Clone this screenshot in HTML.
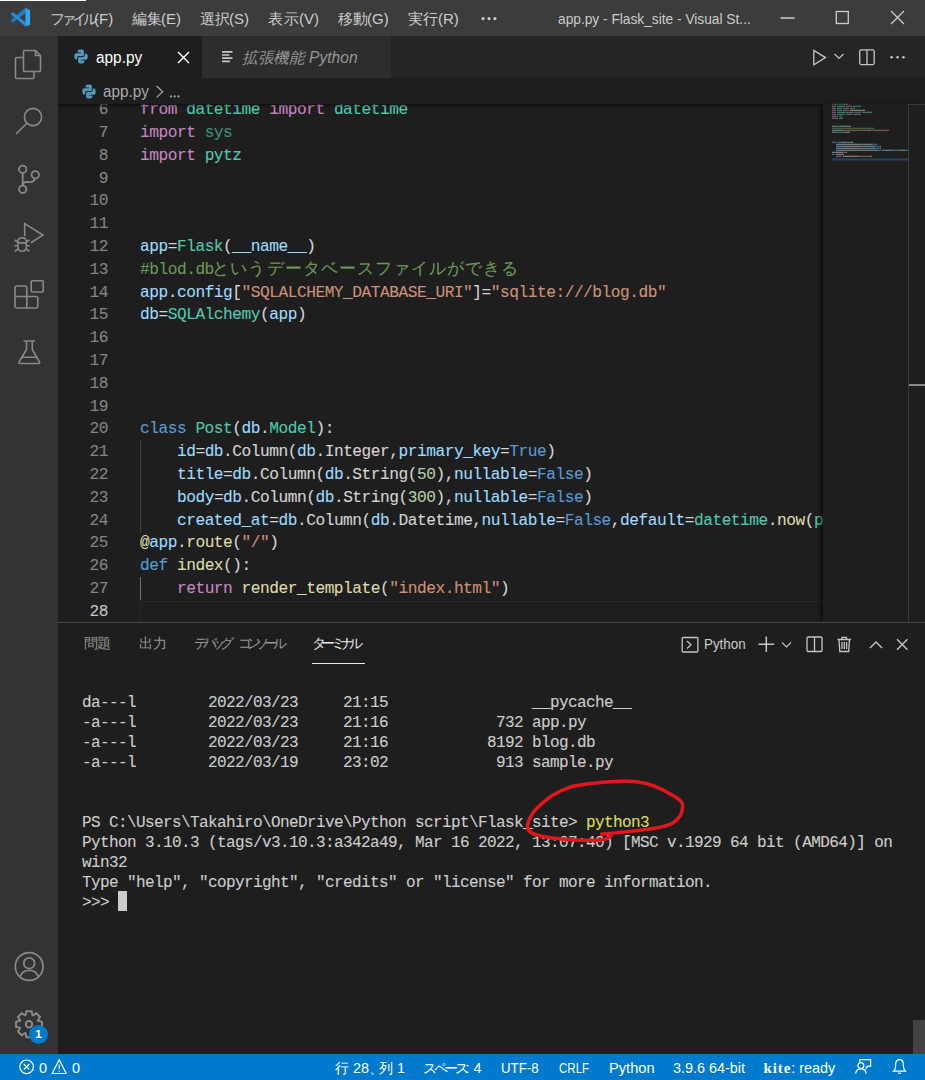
<!DOCTYPE html>
<html><head><meta charset="utf-8">
<style>
*{margin:0;padding:0;box-sizing:border-box}
html,body{width:925px;height:1080px;overflow:hidden;background:#1e1e1e;font-family:"Liberation Sans",sans-serif;font-feature-settings:"palt"}
.a{position:absolute}
svg{position:absolute;overflow:visible}
#title{left:0;top:0;width:925px;height:36px;background:#3c3c3c}
.menu{position:absolute;top:1px;height:36px;line-height:36px;font-size:15px;color:#cccccc;white-space:nowrap}
#act{left:0;top:36px;width:58px;height:1018px;background:#333333}
#tabs{left:58px;top:36px;width:867px;height:42px;background:#252526}
#crumb{left:58px;top:78px;width:867px;height:26px;background:#1e1e1e}
#editor{left:58px;top:104px;width:765px;height:518px;background:#1e1e1e;overflow:hidden}
.ln{position:absolute;left:0;width:50px;text-align:right;color:#858585;-webkit-text-stroke:0.1px currentColor;font-family:"Liberation Mono",monospace;font-size:16.2px;letter-spacing:-0.483px;height:22.8px;line-height:22.8px}
.cl{position:absolute;left:82px;white-space:pre;color:#d4d4d4;-webkit-text-stroke:0.1px currentColor;font-family:"Liberation Mono",monospace;font-size:16.2px;letter-spacing:-0.483px;height:22.8px;line-height:22.8px}
.k{color:#c586c0}.b{color:#569cd6}.t{color:#4ec9b0}.f{color:#dcdcaa}.v{color:#9cdcfe}.s{color:#ce9178}.c{color:#6a9955}.n{color:#b5cea8}
#panel{left:58px;top:622px;width:867px;height:432px;background:#1e1e1e;border-top:1px solid #464646}
.ptab{position:absolute;top:0;height:42px;line-height:42px;font-size:13.5px;color:#969696;white-space:nowrap}
.term{position:absolute;left:24px;white-space:pre;color:#cccccc;-webkit-text-stroke:0.12px currentColor;font-family:"Liberation Mono",monospace;font-size:16px;letter-spacing:-0.6px;height:20px;line-height:20px}
#status{left:0;top:1054px;width:925px;height:26px;background:#007acc}
.st{position:absolute;top:1px;height:26px;line-height:26px;font-size:14.4px;color:#ffffff;white-space:nowrap}
</style></head><body>
<div id="title" class="a">
  <div class="a" style="left:0;top:0;width:86px;height:1px;background:#fff"></div>
  <svg style="left:0;top:0" width="40" height="36" viewBox="0 0 40 36">
    <path d="M25.4 7.8 L25.4 13.2 L12.6 22.6 L10.6 20.6 Z" fill="#1c7fc8"/>
    <path d="M10.6 14.0 L12.6 12.1 L25.4 21.9 L25.4 26.6 Z" fill="#1e8fdc"/>
    <path d="M25.4 7.8 L30.1 10.2 L30.1 24.7 L25.4 26.6 Z" fill="#36a5f0"/>
  </svg>
  <div id="m1" class="menu" style="left:50.20px"><span class="jk" style="letter-spacing:-4.050px">ファイル</span>(F)</div>
  <div id="m2" class="menu" style="left:132.00px"><span class="jk" style="letter-spacing:-0.500px">編集</span>(E)</div>
  <div id="m3" class="menu" style="left:200.00px"><span class="jk" style="letter-spacing:-0.500px">選択</span>(S)</div>
  <div id="m4" class="menu" style="left:268.00px"><span class="jk" style="letter-spacing:0.500px">表示</span>(V)</div>
  <div id="m5" class="menu" style="left:338.00px"><span class="jk" style="letter-spacing:-0.500px">移動</span>(G)</div>
  <div id="m6" class="menu" style="left:408.00px"><span class="jk" style="letter-spacing:0.000px">実行</span>(R)</div>
  <svg style="left:480px;top:16px" width="20" height="6"><circle cx="3" cy="2.6" r="1.6" fill="#ccc"/><circle cx="9" cy="2.6" r="1.6" fill="#ccc"/><circle cx="14.9" cy="2.6" r="1.6" fill="#ccc"/></svg>
  <div id="m7" class="menu" style="left:557.90px;transform:scaleX(0.9152);transform-origin:0 0">app.py - Flask_site - Visual St...</div>
  <svg style="left:0;top:0" width="925" height="36">
    <line x1="780.5" y1="18" x2="794.5" y2="18" stroke="#ccc" stroke-width="1.5"/>
    <rect x="836.3" y="11.5" width="12" height="12" fill="none" stroke="#ccc" stroke-width="1.3"/>
    <path d="M891 11 L904 24 M904 11 L891 24" stroke="#ccc" stroke-width="1.3"/>
  </svg>
</div>
<div id="act" class="a">
  <svg style="left:0;top:0" width="58" height="1018" viewBox="0 36 58 1018" fill="none" stroke="#898989" stroke-width="1.6">
    <!-- explorer -->
    <path d="M22.8 57.5 H16.5 Q15.5 57.5 15.5 58.5 V77.5 Q15.5 78.5 16.5 78.5 H33 Q34 78.5 34 77.5 V71.5"/>
    <path d="M23.5 50.5 H35.5 L40.5 55.5 V70.5 Q40.5 71.5 39.5 71.5 H24.5 Q23.5 71.5 23.5 70.5 V51.5 Q23.5 50.5 24.5 50.5 Z M35.5 50.5 V55.5 H40.5"/>
    <!-- search -->
    <circle cx="33" cy="117" r="8.6"/>
    <path d="M26.8 123.2 L16 134"/>
    <!-- source control -->
    <g stroke-width="1.8">
    <circle cx="22.7" cy="169.3" r="3.7"/>
    <circle cx="35.3" cy="174.8" r="3.7"/>
    <circle cx="22.7" cy="189.3" r="3.7"/>
    <path d="M22.7 173 V185.6 M35 178.5 Q34 182.2 30 182.2 H26 Q22.7 182.2 22.7 185.6"/>
    </g>
    <!-- run debug -->
    <path d="M24.7 236.2 V223.6 L43 235.1 L30.8 242.8" stroke-width="1.6"/>
    <path d="M17.9 247 V242 Q17.9 237.8 22.1 237.8 Q26.3 237.8 26.3 242 V247 Q26.3 251.2 22.1 251.2 Q17.9 251.2 17.9 247 Z M17.9 242.9 H26.3"/>
    <path d="M14.8 240 L17.8 242 M14.4 245.7 H17.8 M14.8 251.3 L17.8 249 M29.4 240 L26.4 242 M29.8 245.7 H26.4 M29.4 251.3 L26.4 249"/>
    <!-- extensions -->
    <path d="M17 286 H25 Q26.8 286 26.8 288 V296.5 H35.8 Q37.8 296.5 37.8 298.5 V306 Q37.8 308 35.8 308 H17 Q15 308 15 306 V288 Q15 286 17 286 Z M15 296.5 H26.8 V308"/>
    <rect x="31.2" y="280.7" width="12" height="11.3" rx="1"/>
    <!-- flask -->
    <path d="M23.5 341 H35 M26.5 341 V349.5 L19 362 Q18.3 363.5 20 363.5 H38.5 Q40.2 363.5 39.5 362 L32.3 349.5 V341 M22 357.2 H36.5" stroke-linejoin="round"/>
    <!-- account -->
    <circle cx="29.2" cy="966.5" r="13.9" stroke-width="1.7"/>
    <circle cx="29.2" cy="963.2" r="5.4" stroke-width="1.7"/>
    <path d="M20.2 976.6 Q22 970.4 29.2 970.4 Q36.4 970.4 38.2 976.6" stroke-width="1.7"/>
    <!-- gear -->
    <g transform="translate(29 1024.2)">
      <path d="M-3.60 -8.90 L-2.52 -12.96 L2.52 -12.96 L3.60 -8.90 L3.75 -8.84 L7.38 -10.94 L10.94 -7.38 L8.84 -3.75 L8.90 -3.60 L12.96 -2.52 L12.96 2.52 L8.90 3.60 L8.84 3.75 L10.94 7.38 L7.38 10.94 L3.75 8.84 L3.60 8.90 L2.52 12.96 L-2.52 12.96 L-3.60 8.90 L-3.75 8.84 L-7.38 10.94 L-10.94 7.38 L-8.84 3.75 L-8.90 3.60 L-12.96 2.52 L-12.96 -2.52 L-8.90 -3.60 L-8.84 -3.75 L-10.94 -7.38 L-7.38 -10.94 L-3.75 -8.84 Z" stroke-width="2" stroke-linejoin="miter"/>
      <circle cx="0" cy="0" r="3.2" stroke-width="2"/>
    </g>
  </svg>
  <div class="a" style="left:29px;top:989px;width:19px;height:19px;border-radius:50%;background:#007acc;color:#fff;font-size:11.5px;font-weight:bold;text-align:center;line-height:19px">1</div>
</div>
<div id="tabs" class="a">
  <div class="a" style="left:0;top:0;width:143.5px;height:42px;background:#1e1e1e"></div>
  <div class="a" style="left:143.5px;top:0;width:189.5px;height:42px;background:#2d2d2d"></div>
  <svg style="left:16px;top:13px" width="14" height="15" viewBox="0 0 14 15">
    <path d="M6.8 0.5 C3.5 0.5 3.7 2 3.7 2 V3.5 H7 V4.2 H2.3 C2.3 4.2 0.3 4 0.3 7.3 C0.3 10.6 2 10.5 2 10.5 H3.2 V8.9 C3.2 8.9 3.1 7.1 5 7.1 H8.1 C8.1 7.1 9.9 7.2 9.9 5.4 V2.3 C9.9 2.3 10.2 0.5 6.8 0.5 Z" fill="#519aba"/>
    <path d="M7.2 14.5 C10.5 14.5 10.3 13 10.3 13 V11.5 H7 V10.8 H11.7 C11.7 10.8 13.7 11 13.7 7.7 C13.7 4.4 12 4.5 12 4.5 H10.8 V6.1 C10.8 6.1 10.9 7.9 9 7.9 H5.9 C5.9 7.9 4.1 7.8 4.1 9.6 V12.7 C4.1 12.7 3.8 14.5 7.2 14.5 Z" fill="#519aba"/>
  </svg>
  <div id="tb1" class="a" style="left:37.90px;transform:scaleX(0.9851);transform-origin:0 0;top:1px;height:42px;line-height:42px;font-size:15.6px;color:#ffffff">app.py</div>
  <svg style="left:0;top:0" width="867" height="42" viewBox="58 36 867 42">
    <path d="M178 52 L189 63 M189 52 L178 63" stroke="#ffffff" stroke-width="1.4"/>
    <path d="M222 51.8 H232.5 M222 55 H229.5 M222 58.2 H232.5 M222 61.4 H230" stroke="#c5c5c5" stroke-width="1.7"/>
    <path d="M813.8 50.5 V64.8 L825.5 57.6 Z" fill="none" stroke="#c5c5c5" stroke-width="1.3"/>
    <path d="M834.5 54 L839 58.5 L843.5 54" fill="none" stroke="#c5c5c5" stroke-width="1.2"/>
    <rect x="859.7" y="49.8" width="14.5" height="14.8" rx="1.5" fill="none" stroke="#c5c5c5" stroke-width="1.3"/>
    <path d="M867 50 V64.5" stroke="#c5c5c5" stroke-width="1.3"/>
    <circle cx="891.6" cy="57.3" r="1.3" fill="#c5c5c5"/><circle cx="897.6" cy="57.3" r="1.3" fill="#c5c5c5"/><circle cx="903.4" cy="57.3" r="1.3" fill="#c5c5c5"/>
  </svg>
  <div id="tb2" class="a" style="left:183.80px;top:1px;height:42px;line-height:42px;font-size:15.6px;color:#969696;font-style:italic"><span class="jk" style="letter-spacing:-0.275px">拡張機能</span> Python</div>
</div>
<div id="crumb" class="a">
  <svg style="left:23.5px;top:5.5px" width="14" height="15" viewBox="0 0 14 15">
    <path d="M6.8 0.5 C3.5 0.5 3.7 2 3.7 2 V3.5 H7 V4.2 H2.3 C2.3 4.2 0.3 4 0.3 7.3 C0.3 10.6 2 10.5 2 10.5 H3.2 V8.9 C3.2 8.9 3.1 7.1 5 7.1 H8.1 C8.1 7.1 9.9 7.2 9.9 5.4 V2.3 C9.9 2.3 10.2 0.5 6.8 0.5 Z" fill="#519aba"/>
    <path d="M7.2 14.5 C10.5 14.5 10.3 13 10.3 13 V11.5 H7 V10.8 H11.7 C11.7 10.8 13.7 11 13.7 7.7 C13.7 4.4 12 4.5 12 4.5 H10.8 V6.1 C10.8 6.1 10.9 7.9 9 7.9 H5.9 C5.9 7.9 4.1 7.8 4.1 9.6 V12.7 C4.1 12.7 3.8 14.5 7.2 14.5 Z" fill="#519aba"/>
  </svg>
  <div id="cr1" class="a" style="left:44.90px;transform:scaleX(0.9787);transform-origin:0 0;top:1px;height:26px;line-height:26px;font-size:15.6px;color:#a9a9a9;white-space:nowrap">app.py</div>
  <svg style="left:0;top:0" width="200" height="26" viewBox="58 78 200 26">
    <path d="M156.6 86 L162.8 91.7 L156.6 97.4" fill="none" stroke="#a9a9a9" stroke-width="1.2"/>
    <circle cx="171" cy="96.4" r="1.1" fill="#a9a9a9"/><circle cx="174.7" cy="96.4" r="1.1" fill="#a9a9a9"/><circle cx="178.4" cy="96.4" r="1.1" fill="#a9a9a9"/>
  </svg>
</div>
<div id="editor" class="a">
  <div class="ln" style="top:-4.80px;color:#858585">6</div><div class="cl" style="top:-4.80px"><span class="k">from</span> <span class="t">datetime</span> <span class="k">import</span> <span class="t">datetime</span></div><div class="ln" style="top:18.00px;color:#858585">7</div><div class="cl" style="top:18.00px"><span class="k">import</span> <span class="t" style="opacity:0.65">sys</span></div><div class="ln" style="top:40.80px;color:#858585">8</div><div class="cl" style="top:40.80px"><span class="k">import</span> <span class="t">pytz</span></div><div class="ln" style="top:63.60px;color:#858585">9</div><div class="ln" style="top:86.40px;color:#858585">10</div><div class="ln" style="top:109.20px;color:#858585">11</div><div class="ln" style="top:132.00px;color:#858585">12</div><div class="cl" style="top:132.00px"><span class="v">app</span>=<span class="t">Flask</span>(<span class="v">__name__</span>)</div><div class="ln" style="top:154.80px;color:#858585">13</div><div class="cl" style="top:154.80px"><span class="c">#blod.db</span><span class="c" style="font-size:16.5px;letter-spacing:1.05px;margin-left:-1.5px">というデータベースファイルができる</span></div><div class="ln" style="top:177.60px;color:#858585">14</div><div class="cl" style="top:177.60px"><span class="v">app</span>.<span class="v">config</span>[<span class="s">&quot;SQLALCHEMY_DATABASE_URI&quot;</span>]=<span class="s">&quot;sqlite:///blog.db&quot;</span></div><div class="ln" style="top:200.40px;color:#858585">15</div><div class="cl" style="top:200.40px"><span class="v">db</span>=<span class="t">SQLAlchemy</span>(<span class="v">app</span>)</div><div class="ln" style="top:223.20px;color:#858585">16</div><div class="ln" style="top:246.00px;color:#858585">17</div><div class="ln" style="top:268.80px;color:#858585">18</div><div class="ln" style="top:291.60px;color:#858585">19</div><div class="ln" style="top:314.40px;color:#858585">20</div><div class="cl" style="top:314.40px"><span class="b">class</span> <span class="t">Post</span>(<span class="v">db</span>.<span class="t">Model</span>):</div><div class="ln" style="top:337.20px;color:#858585">21</div><div class="cl" style="top:337.20px">    <span class="v">id</span>=<span class="v">db</span>.Column(<span class="v">db</span>.Integer,<span class="v">primary_key</span>=<span class="b">True</span>)</div><div class="ln" style="top:360.00px;color:#858585">22</div><div class="cl" style="top:360.00px">    <span class="v">title</span>=<span class="v">db</span>.Column(<span class="v">db</span>.String(<span class="n">50</span>),<span class="v">nullable</span>=<span class="b">False</span>)</div><div class="ln" style="top:382.80px;color:#858585">23</div><div class="cl" style="top:382.80px">    <span class="v">body</span>=<span class="v">db</span>.Column(<span class="v">db</span>.String(<span class="n">300</span>),<span class="v">nullable</span>=<span class="b">False</span>)</div><div class="ln" style="top:405.60px;color:#858585">24</div><div class="cl" style="top:405.60px">    <span class="v">created_at</span>=<span class="v">db</span>.Column(<span class="v">db</span>.Datetime,<span class="v">nullable</span>=<span class="b">False</span>,<span class="v">default</span>=<span class="t">datetime</span>.<span class="f">now</span>(<span class="t">pytz</span>.<span class="v">timezone</span>(<span class="s">&#x27;Asia/Tokyo&#x27;</span>))</div><div class="ln" style="top:428.40px;color:#858585">25</div><div class="cl" style="top:428.40px"><span class="f">@</span><span class="v">app</span>.<span class="f">route</span>(<span class="s">&quot;/&quot;</span>)</div><div class="ln" style="top:451.20px;color:#858585">26</div><div class="cl" style="top:451.20px"><span class="b">def</span> <span class="f">index</span>():</div><div class="ln" style="top:474.00px;color:#858585">27</div><div class="cl" style="top:474.00px">    <span class="k">return</span> <span class="f">render_template</span>(<span class="s">&quot;index.html&quot;</span>)</div><div class="ln" style="top:496.80px;color:#c6c6c6">28</div><div class="a" style="left:81.5px;top:336px;width:1px;height:91.5px;background:#404040"></div><div class="a" style="left:81.5px;top:473px;width:1px;height:23px;background:#707070"></div><div class="a" style="left:81.5px;top:497px;width:700px;height:30px;border-top:1px solid #282828;border-left:1px solid #282828"></div>
</div>
<div class="a" style="left:58px;top:104px;width:867px;height:4px;background:linear-gradient(#0007,#0000)"></div>
<!-- minimap & scrollbar -->
<div class="a" style="left:823px;top:104px;width:102px;height:518px;background:#1e1e1e;box-shadow:-4px 0 5px -2px #000a"></div>
<svg style="left:0;top:0" width="925" height="1080"><rect x="832" y="158.3" width="76" height="2.2" fill="#264f78" opacity="0.7"/><rect x="832" y="113.7" width="4" height="1.3" fill="#c586c0" opacity="0.5"/><rect x="837" y="113.7" width="8" height="1.3" fill="#4ec9b0" opacity="0.5"/><rect x="846" y="113.7" width="6" height="1.3" fill="#c586c0" opacity="0.5"/><rect x="853" y="113.7" width="8" height="1.3" fill="#4ec9b0" opacity="0.5"/><rect x="832" y="115.7" width="6" height="1.3" fill="#c586c0" opacity="0.5"/><rect x="839" y="115.7" width="3" height="1.3" fill="#4ec9b0" opacity="0.5"/><rect x="832" y="117.7" width="6" height="1.3" fill="#c586c0" opacity="0.5"/><rect x="839" y="117.7" width="4" height="1.3" fill="#4ec9b0" opacity="0.5"/><rect x="832" y="125.7" width="3" height="1.3" fill="#9cdcfe" opacity="0.5"/><rect x="835" y="125.7" width="1" height="1.3" fill="#d4d4d4" opacity="0.5"/><rect x="836" y="125.7" width="5" height="1.3" fill="#4ec9b0" opacity="0.5"/><rect x="841" y="125.7" width="1" height="1.3" fill="#d4d4d4" opacity="0.5"/><rect x="842" y="125.7" width="8" height="1.3" fill="#9cdcfe" opacity="0.5"/><rect x="850" y="125.7" width="1" height="1.3" fill="#d4d4d4" opacity="0.5"/><rect x="832" y="127.7" width="8" height="1.3" fill="#6a9955" opacity="0.5"/><rect x="840" y="127.7" width="34" height="1.3" fill="#6a9955" opacity="0.5"/><rect x="832" y="129.7" width="3" height="1.3" fill="#9cdcfe" opacity="0.5"/><rect x="835" y="129.7" width="1" height="1.3" fill="#d4d4d4" opacity="0.5"/><rect x="836" y="129.7" width="6" height="1.3" fill="#9cdcfe" opacity="0.5"/><rect x="842" y="129.7" width="1" height="1.3" fill="#d4d4d4" opacity="0.5"/><rect x="843" y="129.7" width="25" height="1.3" fill="#ce9178" opacity="0.5"/><rect x="868" y="129.7" width="2" height="1.3" fill="#d4d4d4" opacity="0.5"/><rect x="870" y="129.7" width="19" height="1.3" fill="#ce9178" opacity="0.5"/><rect x="832" y="131.7" width="2" height="1.3" fill="#9cdcfe" opacity="0.5"/><rect x="834" y="131.7" width="1" height="1.3" fill="#d4d4d4" opacity="0.5"/><rect x="835" y="131.7" width="10" height="1.3" fill="#4ec9b0" opacity="0.5"/><rect x="845" y="131.7" width="1" height="1.3" fill="#d4d4d4" opacity="0.5"/><rect x="846" y="131.7" width="3" height="1.3" fill="#9cdcfe" opacity="0.5"/><rect x="849" y="131.7" width="1" height="1.3" fill="#d4d4d4" opacity="0.5"/><rect x="832" y="141.7" width="5" height="1.3" fill="#569cd6" opacity="0.5"/><rect x="838" y="141.7" width="4" height="1.3" fill="#4ec9b0" opacity="0.5"/><rect x="842" y="141.7" width="1" height="1.3" fill="#d4d4d4" opacity="0.5"/><rect x="843" y="141.7" width="2" height="1.3" fill="#9cdcfe" opacity="0.5"/><rect x="845" y="141.7" width="1" height="1.3" fill="#d4d4d4" opacity="0.5"/><rect x="846" y="141.7" width="5" height="1.3" fill="#4ec9b0" opacity="0.5"/><rect x="851" y="141.7" width="2" height="1.3" fill="#d4d4d4" opacity="0.5"/><rect x="836" y="143.7" width="2" height="1.3" fill="#9cdcfe" opacity="0.5"/><rect x="838" y="143.7" width="1" height="1.3" fill="#d4d4d4" opacity="0.5"/><rect x="839" y="143.7" width="2" height="1.3" fill="#9cdcfe" opacity="0.5"/><rect x="841" y="143.7" width="8" height="1.3" fill="#d4d4d4" opacity="0.5"/><rect x="849" y="143.7" width="2" height="1.3" fill="#9cdcfe" opacity="0.5"/><rect x="851" y="143.7" width="9" height="1.3" fill="#d4d4d4" opacity="0.5"/><rect x="860" y="143.7" width="11" height="1.3" fill="#9cdcfe" opacity="0.5"/><rect x="871" y="143.7" width="1" height="1.3" fill="#d4d4d4" opacity="0.5"/><rect x="872" y="143.7" width="4" height="1.3" fill="#569cd6" opacity="0.5"/><rect x="876" y="143.7" width="1" height="1.3" fill="#d4d4d4" opacity="0.5"/><rect x="836" y="145.7" width="5" height="1.3" fill="#9cdcfe" opacity="0.5"/><rect x="841" y="145.7" width="1" height="1.3" fill="#d4d4d4" opacity="0.5"/><rect x="842" y="145.7" width="2" height="1.3" fill="#9cdcfe" opacity="0.5"/><rect x="844" y="145.7" width="8" height="1.3" fill="#d4d4d4" opacity="0.5"/><rect x="852" y="145.7" width="2" height="1.3" fill="#9cdcfe" opacity="0.5"/><rect x="854" y="145.7" width="8" height="1.3" fill="#d4d4d4" opacity="0.5"/><rect x="862" y="145.7" width="2" height="1.3" fill="#b5cea8" opacity="0.5"/><rect x="864" y="145.7" width="2" height="1.3" fill="#d4d4d4" opacity="0.5"/><rect x="866" y="145.7" width="8" height="1.3" fill="#9cdcfe" opacity="0.5"/><rect x="874" y="145.7" width="1" height="1.3" fill="#d4d4d4" opacity="0.5"/><rect x="875" y="145.7" width="5" height="1.3" fill="#569cd6" opacity="0.5"/><rect x="880" y="145.7" width="1" height="1.3" fill="#d4d4d4" opacity="0.5"/><rect x="836" y="147.7" width="4" height="1.3" fill="#9cdcfe" opacity="0.5"/><rect x="840" y="147.7" width="1" height="1.3" fill="#d4d4d4" opacity="0.5"/><rect x="841" y="147.7" width="2" height="1.3" fill="#9cdcfe" opacity="0.5"/><rect x="843" y="147.7" width="8" height="1.3" fill="#d4d4d4" opacity="0.5"/><rect x="851" y="147.7" width="2" height="1.3" fill="#9cdcfe" opacity="0.5"/><rect x="853" y="147.7" width="8" height="1.3" fill="#d4d4d4" opacity="0.5"/><rect x="861" y="147.7" width="3" height="1.3" fill="#b5cea8" opacity="0.5"/><rect x="864" y="147.7" width="2" height="1.3" fill="#d4d4d4" opacity="0.5"/><rect x="866" y="147.7" width="8" height="1.3" fill="#9cdcfe" opacity="0.5"/><rect x="874" y="147.7" width="1" height="1.3" fill="#d4d4d4" opacity="0.5"/><rect x="875" y="147.7" width="5" height="1.3" fill="#569cd6" opacity="0.5"/><rect x="880" y="147.7" width="1" height="1.3" fill="#d4d4d4" opacity="0.5"/><rect x="836" y="149.7" width="10" height="1.3" fill="#9cdcfe" opacity="0.5"/><rect x="846" y="149.7" width="1" height="1.3" fill="#d4d4d4" opacity="0.5"/><rect x="847" y="149.7" width="2" height="1.3" fill="#9cdcfe" opacity="0.5"/><rect x="849" y="149.7" width="8" height="1.3" fill="#d4d4d4" opacity="0.5"/><rect x="857" y="149.7" width="2" height="1.3" fill="#9cdcfe" opacity="0.5"/><rect x="859" y="149.7" width="10" height="1.3" fill="#d4d4d4" opacity="0.5"/><rect x="869" y="149.7" width="8" height="1.3" fill="#9cdcfe" opacity="0.5"/><rect x="877" y="149.7" width="1" height="1.3" fill="#d4d4d4" opacity="0.5"/><rect x="878" y="149.7" width="5" height="1.3" fill="#569cd6" opacity="0.5"/><rect x="883" y="149.7" width="1" height="1.3" fill="#d4d4d4" opacity="0.5"/><rect x="884" y="149.7" width="7" height="1.3" fill="#9cdcfe" opacity="0.5"/><rect x="891" y="149.7" width="1" height="1.3" fill="#d4d4d4" opacity="0.5"/><rect x="892" y="149.7" width="8" height="1.3" fill="#4ec9b0" opacity="0.5"/><rect x="900" y="149.7" width="1" height="1.3" fill="#d4d4d4" opacity="0.5"/><rect x="901" y="149.7" width="3" height="1.3" fill="#dcdcaa" opacity="0.5"/><rect x="904" y="149.7" width="1" height="1.3" fill="#d4d4d4" opacity="0.5"/><rect x="905" y="149.7" width="3" height="1.3" fill="#4ec9b0" opacity="0.5"/><rect x="832" y="151.7" width="1" height="1.3" fill="#dcdcaa" opacity="0.5"/><rect x="833" y="151.7" width="3" height="1.3" fill="#9cdcfe" opacity="0.5"/><rect x="836" y="151.7" width="1" height="1.3" fill="#d4d4d4" opacity="0.5"/><rect x="837" y="151.7" width="5" height="1.3" fill="#dcdcaa" opacity="0.5"/><rect x="842" y="151.7" width="1" height="1.3" fill="#d4d4d4" opacity="0.5"/><rect x="843" y="151.7" width="3" height="1.3" fill="#ce9178" opacity="0.5"/><rect x="846" y="151.7" width="1" height="1.3" fill="#d4d4d4" opacity="0.5"/><rect x="832" y="153.7" width="3" height="1.3" fill="#569cd6" opacity="0.5"/><rect x="836" y="153.7" width="5" height="1.3" fill="#dcdcaa" opacity="0.5"/><rect x="841" y="153.7" width="3" height="1.3" fill="#d4d4d4" opacity="0.5"/><rect x="836" y="155.7" width="6" height="1.3" fill="#c586c0" opacity="0.5"/><rect x="843" y="155.7" width="15" height="1.3" fill="#dcdcaa" opacity="0.5"/><rect x="858" y="155.7" width="1" height="1.3" fill="#d4d4d4" opacity="0.5"/><rect x="859" y="155.7" width="12" height="1.3" fill="#ce9178" opacity="0.5"/><rect x="871" y="155.7" width="1" height="1.3" fill="#d4d4d4" opacity="0.5"/><rect x="832" y="103.7" width="1" height="1.3" fill="#6a9955" opacity="0.5"/><rect x="834" y="103.7" width="4" height="1.3" fill="#6a9955" opacity="0.5"/><rect x="839" y="103.7" width="2" height="1.3" fill="#6a9955" opacity="0.5"/><rect x="842" y="103.7" width="6" height="1.3" fill="#6a9955" opacity="0.5"/><rect x="849" y="103.7" width="1" height="1.3" fill="#6a9955" opacity="0.5"/><rect x="832" y="105.7" width="4" height="1.3" fill="#c586c0" opacity="0.5"/><rect x="837" y="105.7" width="8" height="1.3" fill="#4ec9b0" opacity="0.5"/><rect x="846" y="105.7" width="6" height="1.3" fill="#c586c0" opacity="0.5"/><rect x="853" y="105.7" width="8" height="1.3" fill="#4ec9b0" opacity="0.5"/><rect x="832" y="107.7" width="4" height="1.3" fill="#c586c0" opacity="0.5"/><rect x="837" y="107.7" width="5" height="1.3" fill="#4ec9b0" opacity="0.5"/><rect x="843" y="107.7" width="6" height="1.3" fill="#c586c0" opacity="0.5"/><rect x="850" y="107.7" width="5" height="1.3" fill="#4ec9b0" opacity="0.5"/><rect x="832" y="109.7" width="4" height="1.3" fill="#c586c0" opacity="0.5"/><rect x="837" y="109.7" width="5" height="1.3" fill="#4ec9b0" opacity="0.5"/><rect x="843" y="109.7" width="6" height="1.3" fill="#c586c0" opacity="0.5"/><rect x="850" y="109.7" width="15" height="1.3" fill="#dcdcaa" opacity="0.5"/><rect x="832" y="111.7" width="4" height="1.3" fill="#c586c0" opacity="0.5"/><rect x="837" y="111.7" width="5" height="1.3" fill="#4ec9b0" opacity="0.5"/><rect x="842" y="111.7" width="1" height="1.3" fill="#d4d4d4" opacity="0.5"/><rect x="843" y="111.7" width="11" height="1.3" fill="#4ec9b0" opacity="0.5"/><rect x="855" y="111.7" width="6" height="1.3" fill="#c586c0" opacity="0.5"/><rect x="862" y="111.7" width="10" height="1.3" fill="#4ec9b0" opacity="0.5"/></svg>
<div class="a" style="left:908px;top:104px;width:1px;height:518px;background:#3a3a3a"></div><div class="a" style="left:908px;top:104px;width:17px;height:1px;background:#3a3a3a"></div>
<div class="a" style="left:909px;top:383.5px;width:16px;height:2px;background:#8a8a8a"></div>
<div id="panel" class="a">
  <div id="p1" class="ptab" style="left:25.60px"><span class="jk" style="letter-spacing:-0.600px">問題</span></div>
  <div id="p2" class="ptab" style="left:81.00px"><span class="jk" style="letter-spacing:0.000px">出力</span></div>
  <div id="p3" class="ptab" style="left:136.00px"><span class="jk" style="letter-spacing:-5.333px">デバッグ</span>  <span class="jk" style="letter-spacing:-5.333px">コンソール</span></div>
  <div id="p4" class="ptab" style="left:254.00px;color:#e7e7e7"><span class="jk" style="letter-spacing:-4.750px">ターミナル</span></div>
  <div class="a" style="left:254px;top:39.5px;width:53px;height:1.2px;background:#e7e7e7"></div>
  <svg style="left:0;top:0" width="867" height="60" viewBox="58 622 867 60" fill="none" stroke="#c5c5c5" stroke-width="1.3">
    <rect x="682.2" y="636.5" width="15.7" height="14.5" rx="1"/>
    <path d="M687 640 L691 643.8 L687 647.5"/>
    <path d="M766.3 635.5 V651 M758.5 643.2 H774.2" stroke-width="1.5"/>
    <path d="M782 641.5 L786.5 646 L791 641.5" stroke-width="1.1"/>
    <rect x="807" y="636" width="15" height="14.5" rx="1.3"/>
    <path d="M814.5 636 V650.5"/>
    <path d="M837.5 638.5 H851 M842 638.5 V636.3 H846.5 V638.5 M839 638.5 L839.8 650.5 H848.7 L849.5 638.5 M842 641 V648 M844.3 641 V648 M846.6 641 V648"/>
    <path d="M870 647 L876 641 L882 647" stroke-width="1.4"/>
    <path d="M897 638.3 L907.5 648.8 M907.5 638.3 L897 648.8" stroke-width="1.4"/>
  </svg>
  <div id="p5" class="a" style="left:646.10px;transform:scaleX(0.9302);transform-origin:0 0;top:0;height:42px;line-height:42px;font-size:14.4px;color:#cccccc">Python</div>
  <div class="term" style="top:70px">da---l        2022/03/23     21:15                __pycache__</div><div class="term" style="top:90px">-a---l        2022/03/23     21:16            732 app.py</div><div class="term" style="top:110px">-a---l        2022/03/23     21:16           8192 blog.db</div><div class="term" style="top:130px">-a---l        2022/03/19     23:02            913 sample.py</div><div class="term" style="top:190px">PS C:\Users\Takahiro\OneDrive\Python script\Flask_site> <span style="color:#dede48">python3</span></div><div class="term" style="top:210px">Python 3.10.3 (tags/v3.10.3:a342a49, Mar 16 2022, 13:07:40) [MSC v.1929 64 bit (AMD64)] on</div><div class="term" style="top:230px">win32</div><div class="term" style="top:250px">Type &quot;help&quot;, &quot;copyright&quot;, &quot;credits&quot; or &quot;license&quot; for more information.</div><div class="term" style="top:270px">&gt;&gt;&gt; </div>
  <div class="a" style="left:60px;top:268px;width:9px;height:20px;background:#cccccc"></div>
  <div class="a" style="left:855px;top:397px;width:12px;height:35px;background:#434343"></div>
</div>
<!-- red ellipse annotation -->
<svg style="left:0;top:0" width="925" height="1080">
  <path d="M601.5 834.3 C604.0 834.0 610.5 833.3 616.6 832.7 C622.7 832.1 631.0 831.4 638.2 830.5 C645.4 829.6 654.1 828.5 659.9 827.3 C665.7 826.0 669.4 825.0 672.8 823.0 C676.2 821.0 678.8 818.1 680.4 815.4 C682.0 812.7 682.5 809.1 682.6 806.8 C682.7 804.5 683.0 803.5 681.0 801.4 C679.0 799.3 675.1 796.8 670.7 794.3 C666.3 791.8 659.9 788.3 654.5 786.2 C649.1 784.1 644.5 782.7 638.2 781.9 C631.9 781.1 623.0 781.3 616.6 781.4 C610.2 781.5 605.3 782.1 600.0 782.6 C594.7 783.1 590.2 783.5 585.0 784.3 C579.8 785.1 573.8 785.9 568.6 787.6 C563.4 789.3 558.4 791.9 554.0 794.5 C549.6 797.1 545.8 800.3 542.4 803.2 C539.0 806.1 535.9 809.1 533.6 812.0 C531.3 814.9 529.8 818.0 528.8 820.7 C527.8 823.5 527.2 826.4 527.8 828.5 C528.4 830.6 529.9 832.0 532.6 833.4 C535.4 834.8 539.1 835.8 544.3 836.8 C549.5 837.8 557.3 838.6 563.8 839.2 C570.3 839.8 577.2 840.1 583.2 840.2 C589.2 840.3 596.0 840.2 600.0 839.9 C604.0 839.6 605.6 839.0 607.5 838.3 C609.4 837.6 610.6 836.2 611.2 835.8" fill="none" stroke="#e3161c" stroke-width="3.5" stroke-linecap="round" stroke-linejoin="round"/>
</svg>
<div id="status" class="a">
  <svg style="left:0;top:0" width="925" height="26" viewBox="0 1054 925 26" fill="none" stroke="#fff" stroke-width="1.2">
    <circle cx="26.6" cy="1066.8" r="6.8"/>
    <path d="M23.8 1064 L29.4 1069.6 M29.4 1064 L23.8 1069.6"/>
    <path d="M59.2 1059.8 L66.2 1073.5 H52.2 Z"/>
    <path d="M59.2 1064.5 V1069 M59.2 1070.5 V1071.7"/>
    <path d="M859.8 1062.3 V1059.6 H870.6 V1066.2 H867.8 L866.2 1068.2 V1066.6"/>
    <circle cx="860.9" cy="1065.6" r="2.9"/>
    <path d="M855.6 1073.6 Q856.2 1068.9 860.9 1068.9 Q865.6 1068.9 866.2 1073.6"/>
    <path d="M893.6 1071.2 Q895.6 1069.2 895.6 1066 V1064.8 Q895.6 1059.6 899.5 1059.6 Q903.4 1059.6 903.4 1064.8 V1066 Q903.4 1069.2 905.4 1071.2 Z"/>
    <path d="M898.2 1072.6 Q899.5 1074.2 900.8 1072.6"/>
  </svg>
  <div class="st" style="left:39px">0</div>
  <div class="st" style="left:72px">0</div>
  <div id="s1" class="st" style="left:335px">行 28<span style="letter-spacing:-4px">、</span>列 1</div>
  <div id="s2" class="st" style="left:423.00px"><span class="jk" style="letter-spacing:-3.400px">スペース</span>: 4</div>
  <div id="s3" class="st" style="left:501.00px;transform:scaleX(0.9202);transform-origin:0 0">UTF-8</div>
  <div id="s4" class="st" style="left:559.10px;transform:scaleX(0.8001);transform-origin:0 0">CRLF</div>
  <div id="s5" class="st" style="left:608.80px;transform:scaleX(1.0163);transform-origin:0 0">Python</div>
  <div id="s6" class="st" style="left:673.00px;transform:scaleX(1.0000);transform-origin:0 0">3.9.6 64-bit</div>
  <div id="s7" class="st" style="left:763.5px"><span style="font-family:'Liberation Serif',serif;font-weight:bold;font-size:15px;letter-spacing:0.9px">kite</span>: ready</div>
</div>
</body></html>
